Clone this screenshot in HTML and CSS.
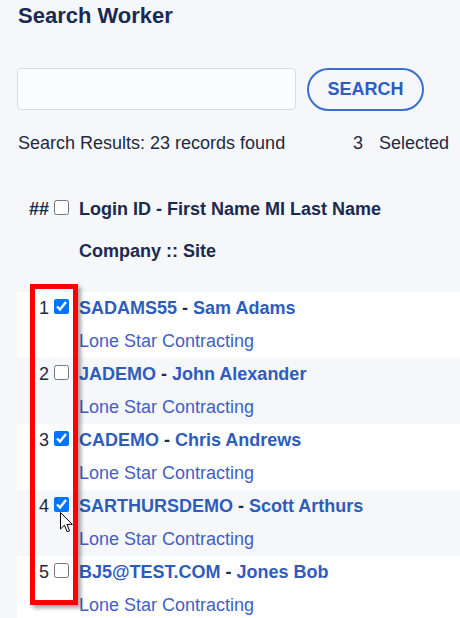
FILE: index.html
```html
<!DOCTYPE html>
<html lang="en">
<head>
    <meta charset="UTF-8">
    <meta name="viewport" content="width=device-width, initial-scale=1.0">
    <title>Search Worker</title>
    <link rel="stylesheet" href="styles.css">
</head>
<body>

<div class="page">
    <h1 class="title">Search Worker</h1>

    <form class="search-form">
        <input type="text" class="search-input">
        <button type="button" class="search-btn">SEARCH</button>
    </form>

    <div class="results-bar">
        <span>Search Results: 23 records found</span>
        <span class="selected"><span class="count">3</span>Selected</span>
    </div>

    <div class="worker-list">
        <div class="worker-head">
            <div class="num-cell">##<input type="checkbox"></div>
            <div class="info-cell">
                <div>Login ID - First Name MI Last Name</div>
                <div>Company :: Site</div>
            </div>
        </div>

        <div class="worker-row">
            <div class="num-cell">1<input type="checkbox" checked></div>
            <div class="info-cell">
                <div><a class="login">SADAMS55</a> - <a class="login">Sam Adams</a></div>
                <div class="company">Lone Star Contracting</div>
            </div>
        </div>
        <div class="worker-row">
            <div class="num-cell">2<input type="checkbox"></div>
            <div class="info-cell">
                <div><a class="login">JADEMO</a> - <a class="login">John Alexander</a></div>
                <div class="company">Lone Star Contracting</div>
            </div>
        </div>
        <div class="worker-row">
            <div class="num-cell">3<input type="checkbox" checked></div>
            <div class="info-cell">
                <div><a class="login">CADEMO</a> - <a class="login">Chris Andrews</a></div>
                <div class="company">Lone Star Contracting</div>
            </div>
        </div>
        <div class="worker-row">
            <div class="num-cell">4<input type="checkbox" checked></div>
            <div class="info-cell">
                <div><a class="login">SARTHURSDEMO</a> - <a class="login">Scott Arthurs</a></div>
                <div class="company">Lone Star Contracting</div>
            </div>
        </div>
        <div class="worker-row">
            <div class="num-cell">5<input type="checkbox"></div>
            <div class="info-cell">
                <div><a class="login">BJ5@TEST.COM</a> - <a class="login">Jones Bob</a></div>
                <div class="company">Lone Star Contracting</div>
            </div>
        </div>
    </div>

    <!-- annotation box + mouse pointer from the screenshot -->
    <div class="highlight"></div>
    <svg class="cursor" width="14" height="21" viewBox="0 0 14 21">
        <path d="M0.5 0.5 L0.5 17 L4.4 13.2 L7.2 19.8 L9.6 18.8 L6.9 12.4 L12.3 12.4 Z" fill="#fff" stroke="#000" stroke-width="1" stroke-linejoin="round"/>
    </svg>
</div>

</body>
</html>
```

FILE: styles.css
```css
body { margin: 0; background-color: #f5f7fb; font-family: "Liberation Sans", Arial, sans-serif; font-size: 18px; color: #1f2940; overflow: hidden; }
.page { position: relative; padding-left: 17px; }
.title { margin: 0; padding-top: 2px; font-size: 22px; line-height: 28px; font-weight: bold; color: #1b2a4e; padding-left: 1px; }

.search-form { display: flex; align-items: flex-start; gap: 11px; margin-top: 38px; }
.search-input { box-sizing: border-box; width: 279px; height: 42px; margin: 0; border: 1px solid #d6dce6; border-radius: 4px; background-color: #fbfcfd; }
.search-btn { box-sizing: border-box; width: 117px; height: 43px; margin: 0; padding: 0; border: 2px solid #3a6fcc; border-radius: 22px; background: transparent; color: #2e5cc2; font-family: inherit; font-size: 18px; font-weight: bold; cursor: pointer; }

.results-bar { display: flex; justify-content: space-between; margin-top: 20px; padding-left: 1px; padding-right: 11px; line-height: 24px; color: #1f2940; }
.count { margin-right: 16px; }

.worker-list { margin-top: 33px; }
.worker-head, .worker-row { display: grid; grid-template-columns: 62px 1fr; }
.worker-head { line-height: 42px; font-weight: bold; color: #1b2a4e; margin-bottom: 20px; }
.worker-row { line-height: 33px; }
.worker-row:nth-child(even) { background-color: #fff; }
.num-cell { text-align: right; padding-right: 10px; white-space: nowrap; }
.num-cell input { width: 15px; height: 15px; margin: 0 0 0 5px; vertical-align: baseline; }
.info-cell { white-space: nowrap; font-weight: bold; color: #1b2a4e; }
.login { color: #2f5cbc; font-weight: bold; }
.company { font-weight: normal; color: #4160c6; }

.highlight { position: absolute; left: 30px; top: 284px; width: 48px; height: 321px; box-sizing: border-box; border: 5px solid #ff0000; box-shadow: 3px 3px 4px rgba(0, 0, 0, 0.35); }
.cursor { position: absolute; left: 60px; top: 512px; }
```
